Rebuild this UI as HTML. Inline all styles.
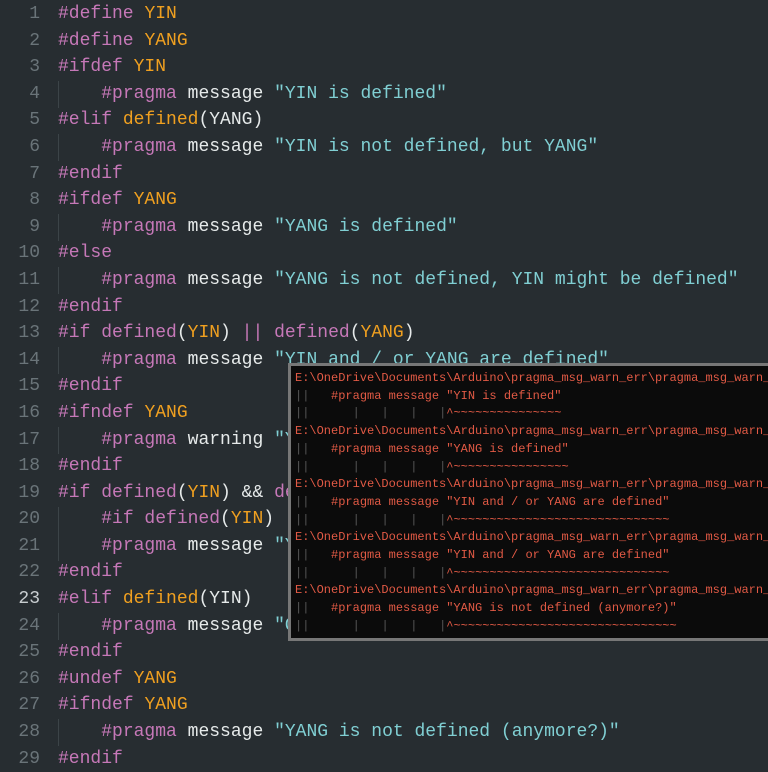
<!DOCTYPE html>
<html><head><meta charset="utf-8"><style>
body{margin:0;width:768px;height:768px;overflow:hidden;background:#272d31;font-family:"Liberation Mono",monospace;}
.ed{position:absolute;left:0;top:1px;font-size:18px;line-height:26.6px;color:#e6eaea}
.ln{position:absolute;left:0;top:0;width:40px;text-align:right;color:#6a7479;white-space:pre}
.ln .cur{color:#c8cdd0}
.cd{position:absolute;left:58px;top:0;white-space:pre}
.p{color:#c678b8}.o{color:#f0a020}.s{color:#80cfd3}
.guide{position:absolute;left:58px;width:1px;background:#3c4448}
.ov{position:absolute;left:288px;top:363px;width:480px;height:272px;background:#0b0b0b;border:3px solid #777;border-right:none;font-size:12px;line-height:17.7px;color:#e25a45;overflow:hidden}
.ov .t{position:absolute;left:4px;top:4px;white-space:pre}
.g{color:#555}
</style></head><body>
<div class="ed"><div class="guide" style="top:80px;height:27px"></div><div class="guide" style="top:133px;height:27px"></div><div class="guide" style="top:213px;height:27px"></div><div class="guide" style="top:266px;height:27px"></div><div class="guide" style="top:346px;height:27px"></div><div class="guide" style="top:426px;height:27px"></div><div class="guide" style="top:506px;height:54px"></div><div class="guide" style="top:612px;height:27px"></div><div class="guide" style="top:718px;height:27px"></div><div class="ln">1
2
3
4
5
6
7
8
9
10
11
12
13
14
15
16
17
18
19
20
21
22
<span class="cur">23</span>
24
25
26
27
28
29</div><div class="cd"><span class="p">#define</span> <span class="o">YIN</span>
<span class="p">#define</span> <span class="o">YANG</span>
<span class="p">#ifdef</span> <span class="o">YIN</span>
    <span class="p">#pragma</span> message <span class="s">"YIN is defined"</span>
<span class="p">#elif</span> <span class="o">defined</span>(YANG)
    <span class="p">#pragma</span> message <span class="s">"YIN is not defined, but YANG"</span>
<span class="p">#endif</span>
<span class="p">#ifdef</span> <span class="o">YANG</span>
    <span class="p">#pragma</span> message <span class="s">"YANG is defined"</span>
<span class="p">#else</span>
    <span class="p">#pragma</span> message <span class="s">"YANG is not defined, YIN might be defined"</span>
<span class="p">#endif</span>
<span class="p">#if defined</span>(<span class="o">YIN</span>) <span class="p">||</span> <span class="p">defined</span>(<span class="o">YANG</span>)
    <span class="p">#pragma</span> message <span class="s">"YIN and / or YANG are defined"</span>
<span class="p">#endif</span>
<span class="p">#ifndef</span> <span class="o">YANG</span>
    <span class="p">#pragma</span> warning <span class="s">"YANG is not defined"</span>
<span class="p">#endif</span>
<span class="p">#if defined</span>(<span class="o">YIN</span>) &amp;&amp; <span class="p">defined</span>(<span class="o">YANG</span>)
    <span class="p">#if defined</span>(<span class="o">YIN</span>)
    <span class="p">#pragma</span> message <span class="s">"YIN and / or YANG are defined"</span>
<span class="p">#endif</span>
<span class="p">#elif</span> <span class="o">defined</span>(YIN)
    <span class="p">#pragma</span> message <span class="s">"Only YIN"</span>
<span class="p">#endif</span>
<span class="p">#undef</span> <span class="o">YANG</span>
<span class="p">#ifndef</span> <span class="o">YANG</span>
    <span class="p">#pragma</span> message <span class="s">"YANG is not defined (anymore?)"</span>
<span class="p">#endif</span></div></div>
<div class="ov"><div class="t">E:\OneDrive\Documents\Arduino\pragma_msg_warn_err\pragma_msg_warn_err.ino
<span class="g">||</span>   #pragma message "YIN is defined"
<span class="g">||</span>      <span class="g">|</span>   <span class="g">|</span>   <span class="g">|</span>   <span class="g">|</span>^~~~~~~~~~~~~~~~
E:\OneDrive\Documents\Arduino\pragma_msg_warn_err\pragma_msg_warn_err.ino
<span class="g">||</span>   #pragma message "YANG is defined"
<span class="g">||</span>      <span class="g">|</span>   <span class="g">|</span>   <span class="g">|</span>   <span class="g">|</span>^~~~~~~~~~~~~~~~~
E:\OneDrive\Documents\Arduino\pragma_msg_warn_err\pragma_msg_warn_err.ino
<span class="g">||</span>   #pragma message "YIN and / or YANG are defined"
<span class="g">||</span>      <span class="g">|</span>   <span class="g">|</span>   <span class="g">|</span>   <span class="g">|</span>^~~~~~~~~~~~~~~~~~~~~~~~~~~~~~~
E:\OneDrive\Documents\Arduino\pragma_msg_warn_err\pragma_msg_warn_err.ino
<span class="g">||</span>   #pragma message "YIN and / or YANG are defined"
<span class="g">||</span>      <span class="g">|</span>   <span class="g">|</span>   <span class="g">|</span>   <span class="g">|</span>^~~~~~~~~~~~~~~~~~~~~~~~~~~~~~~
E:\OneDrive\Documents\Arduino\pragma_msg_warn_err\pragma_msg_warn_err.ino
<span class="g">||</span>   #pragma message "YANG is not defined (anymore?)"
<span class="g">||</span>      <span class="g">|</span>   <span class="g">|</span>   <span class="g">|</span>   <span class="g">|</span>^~~~~~~~~~~~~~~~~~~~~~~~~~~~~~~~</div></div>
</body></html>
